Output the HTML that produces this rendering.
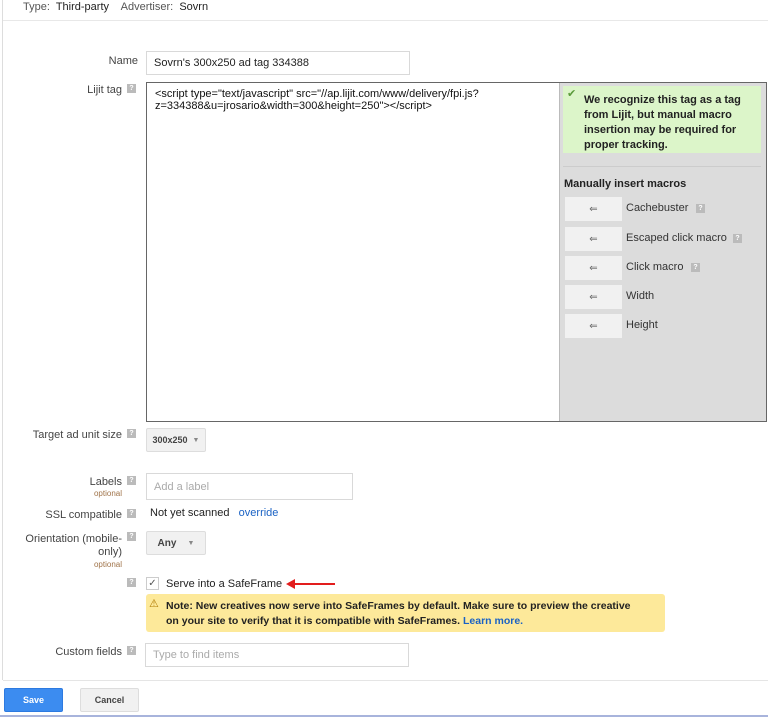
<!DOCTYPE html>
<html><head><meta charset="utf-8">
<style>
*{box-sizing:border-box;margin:0;padding:0}
body{width:768px;height:717px;background:#fff;font-family:"Liberation Sans",Arial,sans-serif;font-size:11px;color:#222;position:relative;overflow:hidden}
.a{position:absolute}
.lbl{position:absolute;text-align:right;color:#444;font-size:11px;right:0}
.q{position:absolute;width:9px;height:9px;background:#bbb;color:#fff;font-size:7px;line-height:9px;text-align:center;font-weight:bold}
.inp{position:absolute;border:1px solid #d9d9d9;background:#fff;font-size:11px;padding-left:7px;display:flex;align-items:center}
.btn{position:absolute;background:#f1f1f1;border:1px solid #ddd;border-radius:2px;font-weight:bold;font-size:9px;color:#444;display:flex;align-items:center;justify-content:center}
.opt{font-size:8px;color:#a0744a;position:absolute;right:0}
.mb{position:absolute;left:565px;width:57px;height:24px;background:#f1f1f1;color:#666;font-size:10px;display:flex;align-items:center;justify-content:center}
.ml{position:absolute;left:626px;color:#333;font-size:11px}
</style></head><body>
<div class="a" style="left:2px;top:0;width:1px;height:680px;background:#ddd"></div>
<div class="a" style="left:23px;top:1px;color:#555">Type:&nbsp; <span style="color:#222">Third-party</span> &nbsp;&nbsp; Advertiser:&nbsp; <span style="color:#222">Sovrn</span></div>
<div class="a" style="left:3px;top:20px;width:765px;height:1px;background:#e8e8e8"></div>

<div class="a" style="left:0;top:0;width:138px;height:700px">
<div class="lbl" style="top:55px">Name</div>
<div class="lbl" style="top:84px;right:16px">Lijit tag</div>
<div class="lbl" style="top:429px;right:16px">Target ad unit size</div>
<div class="lbl" style="top:476px;right:16px">Labels</div>
<div class="opt" style="top:489px;right:16px">optional</div>
<div class="lbl" style="top:509px;right:16px">SSL compatible</div>
<div class="lbl" style="top:533px;right:16px;line-height:13px">Orientation (mobile-<br>only)</div>
<div class="opt" style="top:560px;right:16px">optional</div>
<div class="lbl" style="top:646px;right:16px">Custom fields</div>
</div>
<div class="q" style="left:127px;top:84px">?</div>
<div class="q" style="left:127px;top:429px">?</div>
<div class="q" style="left:127px;top:476px">?</div>
<div class="q" style="left:127px;top:509px">?</div>
<div class="q" style="left:127px;top:532px">?</div>
<div class="q" style="left:127px;top:578px">?</div>
<div class="q" style="left:127px;top:646px">?</div>

<div class="inp" style="left:146px;top:51px;width:264px;height:24px;color:#222">Sovrn's 300x250 ad tag 334388</div>

<div class="a" style="left:146px;top:82px;width:621px;height:340px;border:1px solid #666;background:#fff"></div>
<div class="a" style="left:155px;top:88px;font-size:11px;line-height:12px;color:#111">&lt;script type="text/javascript" src="//ap.lijit.com/www/delivery/fpi.js?<br>z=334388&amp;u=jrosario&amp;width=300&amp;height=250"&gt;&lt;/script&gt;</div>
<div class="a" style="left:559px;top:83px;width:207px;height:338px;background:#dcdcdc;border-left:1px solid #bbb"></div>
<div class="a" style="left:563px;top:86px;width:198px;height:67px;background:#dcf5c9"></div>
<div class="a" style="left:567px;top:87px;color:#5a9a3a;font-size:11px">✔</div>
<div class="a" style="left:584px;top:93px;font-weight:bold;font-size:11px;line-height:15px;color:#222">We recognize this tag as a tag<br>from Lijit, but manual macro<br>insertion may be required for<br>proper tracking.</div>
<div class="a" style="left:563px;top:166px;width:198px;height:1px;background:#ccc"></div>
<div class="a" style="left:564px;top:178px;font-weight:bold;font-size:11px;color:#222">Manually insert macros</div>
<div class="mb" style="top:197px">⇐</div><div class="ml" style="top:202px">Cachebuster</div><div class="q" style="left:696px;top:204px">?</div>
<div class="mb" style="top:227px">⇐</div><div class="ml" style="top:232px">Escaped click macro</div><div class="q" style="left:733px;top:234px">?</div>
<div class="mb" style="top:256px">⇐</div><div class="ml" style="top:261px">Click macro</div><div class="q" style="left:691px;top:263px">?</div>
<div class="mb" style="top:285px">⇐</div><div class="ml" style="top:290px">Width</div>
<div class="mb" style="top:314px">⇐</div><div class="ml" style="top:319px">Height</div>

<div class="btn" style="left:146px;top:428px;width:60px;height:24px">300x250 &nbsp;<span style="color:#888;font-size:7px">▼</span></div>
<div class="inp" style="left:146px;top:473px;width:207px;height:27px;color:#aaa">Add a label</div>
<div class="a" style="left:150px;top:507px;font-size:11px;color:#222">Not yet scanned &nbsp;&nbsp;<span style="color:#1a62c4">override</span></div>
<div class="btn" style="left:146px;top:531px;width:60px;height:24px;font-size:10px">Any &nbsp;&nbsp;&nbsp;<span style="color:#888;font-size:7px">▼</span></div>

<div class="a" style="left:146px;top:577px;width:13px;height:13px;border:1px solid #ccc;background:#fff;font-size:10px;line-height:11px;text-align:center;color:#555">✓</div>
<div class="a" style="left:166px;top:578px;font-size:11px;color:#222">Serve into a SafeFrame</div>
<div class="a" style="left:293px;top:583px;width:42px;height:2px;background:#e21d1d"></div>
<div class="a" style="left:286px;top:579px;width:0;height:0;border-top:5px solid transparent;border-bottom:5px solid transparent;border-right:9px solid #e21d1d"></div>

<div class="a" style="left:146px;top:594px;width:519px;height:38px;background:#fde99a;border-radius:3px"></div>
<div class="a" style="left:149px;top:597px;font-size:11px;color:#b07a00">⚠</div>
<div class="a" style="left:166px;top:599px;font-weight:bold;font-size:10.5px;line-height:15px;color:#222">Note: New creatives now serve into SafeFrames by default. Make sure to preview the creative<br>on your site to verify that it is compatible with SafeFrames. <span style="color:#1a62c4">Learn more.</span></div>

<div class="inp" style="left:145px;top:643px;width:264px;height:24px;color:#aaa">Type to find items</div>

<div class="a" style="left:3px;top:680px;width:765px;height:1px;background:#e5e5e5"></div>
<div class="a" style="left:4px;top:688px;width:59px;height:24px;background:#3c8cf0;border:1px solid #2d7ae0;border-radius:2px;color:#fff;font-weight:bold;font-size:9px;display:flex;align-items:center;justify-content:center">Save</div>
<div class="btn" style="left:80px;top:688px;width:59px;height:24px;font-size:9px">Cancel</div>
<div class="a" style="left:0;top:715px;width:768px;height:2px;background:#a8b4dc"></div>
</body></html>
